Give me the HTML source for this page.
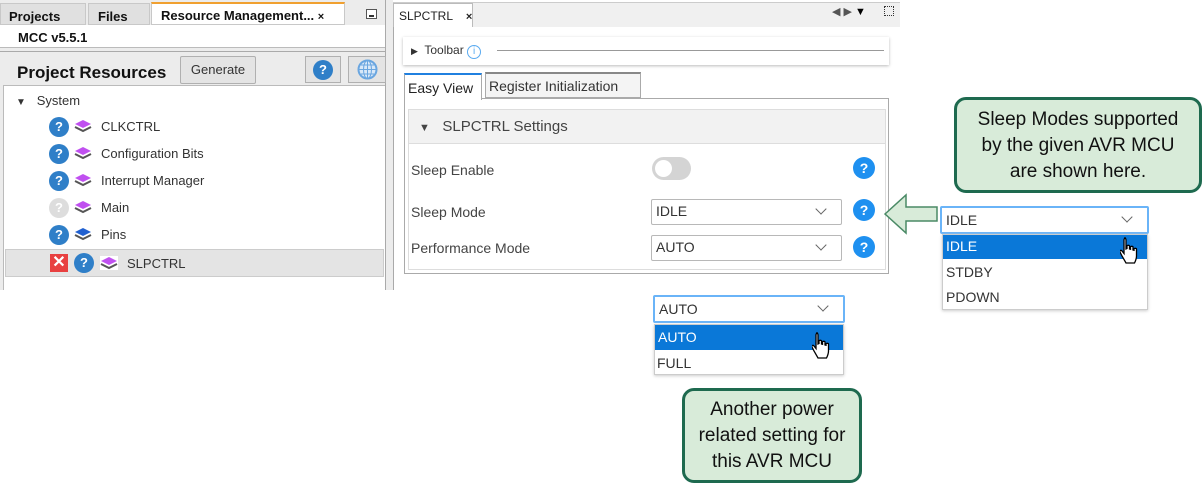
<!DOCTYPE html>
<html><head><style>
*{box-sizing:border-box;margin:0;padding:0}
body{width:1204px;height:485px;background:#fff;position:relative;overflow:hidden;font-family:"Liberation Sans",sans-serif;font-size:13px;color:#333}
.a{position:absolute;white-space:nowrap}
.q{position:absolute;width:20px;height:20px;border-radius:50%;background:#2f7fc8;color:#fff;font-weight:bold;font-size:13px;text-align:center;line-height:20px}
.qb{background:#1e90f0;width:22px;height:22px;line-height:22px;font-size:14px}
.sel{position:absolute;border:1px solid #b8b8b8;border-radius:2px;background:#fff;font-size:14px;color:#333;padding-left:4px;line-height:23px}
.chev{position:absolute;right:16px;top:5px;width:8px;height:8px;border-right:1.5px solid #666;border-bottom:1.5px solid #666;transform:rotate(45deg)}
.lay{position:absolute;width:18px;height:14px}
.call{position:absolute;background:#d8ebd9;border:3px solid #1e6a4f;border-radius:12px;font-size:19px;color:#111;text-align:center;line-height:26px;white-space:nowrap}
</style></head><body>
<!-- left panel -->
<div class="a" style="left:0;top:0;width:386px;height:290px;background:#ececec;border-right:1px solid #aaa"></div>
<div class="a" style="left:0;top:3px;width:86px;height:22px;background:#e0e0e0;border:1px solid #c8c8c8;font-weight:bold;font-size:13px;padding:5px 8px;color:#111">Projects</div>
<div class="a" style="left:88px;top:3px;width:62px;height:22px;background:#e0e0e0;border:1px solid #c8c8c8;font-weight:bold;font-size:13px;padding:5px 9px;color:#111">Files</div>
<div class="a" style="left:151px;top:2px;width:194px;height:23px;background:#fff;border:1px solid #c8c8c8;border-top:2px solid #f0a030;font-weight:bold;font-size:13px;padding:4px 9px;color:#111">Resource Management... <span style="font-size:11px">×</span></div>
<div class="a" style="left:366px;top:9px;width:11px;height:10px;border:1px solid #555;background:#fff"><div class="a" style="left:2px;top:5px;width:5px;height:2px;background:#333"></div></div>
<div class="a" style="left:0;top:25px;width:385px;height:23px;background:#fff;border-bottom:1px solid #bbb;font-weight:bold;font-size:13px;padding:5px 18px;color:#111">MCC v5.5.1</div>
<div class="a" style="left:0;top:51px;width:385px;height:2px;border-top:1px solid #aaa"></div>
<div class="a" style="left:17px;top:63px;font-weight:bold;font-size:17px;color:#111">Project Resources</div>
<div class="a" style="left:180px;top:56px;width:76px;height:28px;background:#e4e4e4;border:1px solid #b0b0b0;border-radius:2px;font-size:13px;text-align:center;line-height:26px">Generate</div>
<div class="a" style="left:305px;top:56px;width:36px;height:27px;background:#e4e4e4;border:1px solid #b0b0b0"><div class="q" style="left:7px;top:3px">?</div></div>
<div class="a" style="left:348px;top:56px;width:38px;height:27px;background:#e4e4e4;border:1px solid #b0b0b0"><svg class="a" style="left:8px;top:2px" width="21" height="21" viewBox="0 0 21 21"><circle cx="10.5" cy="10.5" r="9" fill="#d8e8f8" stroke="#6aa6e0" stroke-width="2"/><path d="M10.5 2v17M2 10.5h17M4 6h13M4 15h13" stroke="#6aa6e0" stroke-width="1"/><ellipse cx="10.5" cy="10.5" rx="4" ry="9" fill="none" stroke="#6aa6e0"/></svg></div>
<div class="a" style="left:3px;top:85px;width:382px;height:205px;background:#fff;border-left:1px solid #bbb;border-top:1px solid #bbb"></div>
<div class="a" style="left:16px;top:93px;font-size:13px"><span style="font-size:10px">▼</span>&nbsp;&nbsp;&nbsp;System</div>
<div class="a" style="left:5px;top:249px;width:379px;height:28px;background:#e4e4e4;border:1px solid #ccc"></div>
<div class="q" style="left:49px;top:117px">?</div><div class="q" style="left:49px;top:144px">?</div><div class="q" style="left:49px;top:171px">?</div>
<div class="q" style="left:49px;top:198px;background:#ddd">?</div><div class="q" style="left:49px;top:225px">?</div>
<div class="a" style="left:50px;top:254px;width:18px;height:18px;background:#e84040;color:#fff;font-weight:bold;text-align:center;line-height:18px;font-size:16px">✕</div>
<div class="q" style="left:74px;top:253px">?</div>
<svg class="lay" style="left:74px;top:119px" viewBox="0 0 18 14"><path d="M1 8l8 4 8-4" fill="none" stroke="#555" stroke-width="2"/><path d="M9 1l8 4-8 4-8-4z" fill="#c050f0"/></svg>
<svg class="lay" style="left:74px;top:146px" viewBox="0 0 18 14"><path d="M1 8l8 4 8-4" fill="none" stroke="#555" stroke-width="2"/><path d="M9 1l8 4-8 4-8-4z" fill="#c050f0"/></svg>
<svg class="lay" style="left:74px;top:173px" viewBox="0 0 18 14"><path d="M1 8l8 4 8-4" fill="none" stroke="#555" stroke-width="2"/><path d="M9 1l8 4-8 4-8-4z" fill="#c050f0"/></svg>
<svg class="lay" style="left:74px;top:200px" viewBox="0 0 18 14"><path d="M1 8l8 4 8-4" fill="none" stroke="#555" stroke-width="2"/><path d="M9 1l8 4-8 4-8-4z" fill="#c050f0"/></svg>
<svg class="lay" style="left:74px;top:227px" viewBox="0 0 18 14"><path d="M1 8l8 4 8-4" fill="none" stroke="#555" stroke-width="2"/><path d="M9 1l8 4-8 4-8-4z" fill="#2060d0"/></svg>
<svg class="lay" style="left:100px;top:256px;background:#fff" viewBox="0 0 18 14"><path d="M1 8l8 4 8-4" fill="none" stroke="#555" stroke-width="2"/><path d="M9 1l8 4-8 4-8-4z" fill="#c050f0"/></svg>
<div class="a" style="left:101px;top:119px">CLKCTRL</div>
<div class="a" style="left:101px;top:146px">Configuration Bits</div>
<div class="a" style="left:101px;top:173px">Interrupt Manager</div>
<div class="a" style="left:101px;top:200px">Main</div>
<div class="a" style="left:101px;top:227px">Pins</div>
<div class="a" style="left:127px;top:256px">SLPCTRL</div>
<!-- right panel -->
<div class="a" style="left:386px;top:0;width:7px;height:290px;background:#ececec"></div>
<div class="a" style="left:393px;top:2px;width:507px;height:25px;background:#f0f0f0;border-top:1px solid #ccc"></div>
<div class="a" style="left:393px;top:27px;width:1px;height:263px;background:#aaa"></div>
<div class="a" style="left:393px;top:3px;width:80px;height:24px;background:#fff;border:1px solid #bbb;border-bottom:none;font-size:12px;padding:5px 5px;color:#222">SLPCTRL &nbsp;&nbsp; <b style="font-size:11px">×</b></div>
<div class="a" style="left:832px;top:5px;font-size:11px;color:#555">◀ ▶ <span style="color:#000">▼</span></div>
<div class="a" style="left:884px;top:6px;width:10px;height:10px;border:1px dotted #333"></div>
<div class="a" style="left:403px;top:37px;width:486px;height:28px;background:#fff;box-shadow:0 1px 3px #bbb"></div>
<div class="a" style="left:411px;top:43px;font-size:12px"><span style="font-size:9px">▶</span>&nbsp; Toolbar <span style="display:inline-block;width:14px;height:14px;border:1px solid #5aaaf0;border-radius:50%;color:#5aaaf0;font-size:10px;text-align:center;line-height:12px">i</span></div>
<div class="a" style="left:497px;top:50px;width:387px;height:1px;background:#999"></div>
<div class="a" style="left:404px;top:98px;width:485px;height:176px;border:1px solid #aaa;background:#fff"></div>
<div class="a" style="left:404px;top:73px;width:78px;height:27px;background:#fff;border:1px solid #aaa;border-top:2px solid #2080e0;border-bottom:none;font-size:14px;padding:5px 3px;color:#222">Easy View</div>
<div class="a" style="left:485px;top:72px;width:156px;height:26px;background:#f4f4f4;border:1px solid #aaa;border-top:2px solid #888;font-size:14px;padding:4px 3px;color:#333">Register Initialization</div>
<div class="a" style="left:408px;top:109px;width:478px;height:35px;background:#f2f2f2;border:1px solid #ddd;font-size:15px;padding:8px 10px;color:#444"><span style="font-size:11px">▼</span>&nbsp;&nbsp; SLPCTRL Settings</div>
<div class="a" style="left:408px;top:144px;width:478px;height:126px;border:1px solid #ddd;border-top:none"></div>
<div class="a" style="left:411px;top:162px;font-size:14px;color:#444">Sleep Enable</div>
<div class="a" style="left:411px;top:204px;font-size:14px;color:#444">Sleep Mode</div>
<div class="a" style="left:411px;top:240px;font-size:14px;color:#444">Performance Mode</div>
<div class="a" style="left:652px;top:157px;width:39px;height:23px;border-radius:12px;background:#d4d4d4"><div class="a" style="left:3px;top:3px;width:17px;height:17px;border-radius:50%;background:#fff"></div></div>
<div class="sel" style="left:651px;top:199px;width:191px;height:26px">IDLE<div class="chev"></div></div>
<div class="sel" style="left:651px;top:235px;width:191px;height:26px">AUTO<div class="chev"></div></div>
<div class="q qb" style="left:853px;top:157px">?</div>
<div class="q qb" style="left:853px;top:199px">?</div>
<div class="q qb" style="left:853px;top:236px">?</div>
<!-- arrow -->
<svg class="a" style="left:883px;top:193px" width="56" height="42" viewBox="0 0 56 42"><path d="M2 21L23 2v12h31v14H23v12z" fill="#d8ebd9" stroke="#4a8a66" stroke-width="1.5"/></svg>
<!-- callout 1 -->
<div class="call" style="left:954px;top:97px;width:248px;height:96px;padding-top:7px">Sleep Modes supported<br>by the given AVR MCU<br>are shown here.</div>
<!-- dropdown 2 -->
<div class="sel" style="left:940px;top:206px;width:209px;height:28px;border:2px solid #6ab4f8;line-height:24px">IDLE<div class="chev"></div></div>
<div class="a" style="left:942px;top:234px;width:206px;height:76px;background:#fff;border:1px solid #ccc;box-shadow:0 1px 3px #ccc"></div>
<div class="a" style="left:943px;top:235px;width:204px;height:24px;background:#0a78d8;color:#fff;font-size:14px;padding:3px 3px">IDLE</div>
<div class="a" style="left:946px;top:264px;font-size:14px">STDBY</div>
<div class="a" style="left:946px;top:289px;font-size:14px">PDOWN</div>
<svg class="a" style="left:1120px;top:236px" width="22" height="30" viewBox="0 0 22 30"><path d="M6 2c1.5 0 2 1 2 2v9l1-.5V10c0-1 2.5-1 2.5 0v3l1 .3V11c0-1 2.5-1 2.5 0v3l1 .3V13c0-1 2.5-1 2.5 0v7c0 3-1 5-2 7H8l-4-7-2-4c-.5-1.5 1-2.3 2-1l2 2.5V4c0-1 .5-2 2-2z" fill="#fff" stroke="#000" stroke-width="1.3" transform="translate(-2 0)"/></svg>
<!-- dropdown 1 -->
<div class="sel" style="left:653px;top:295px;width:192px;height:28px;border:2px solid #6ab4f8;line-height:24px">AUTO<div class="chev"></div></div>
<div class="a" style="left:654px;top:324px;width:190px;height:51px;background:#fff;border:1px solid #ccc;box-shadow:0 1px 3px #ccc"></div>
<div class="a" style="left:655px;top:325px;width:188px;height:25px;background:#0a78d8;color:#fff;font-size:14px;padding:4px 3px">AUTO</div>
<div class="a" style="left:657px;top:355px;font-size:14px">FULL</div>
<svg class="a" style="left:812px;top:331px" width="22" height="30" viewBox="0 0 22 30"><path d="M6 2c1.5 0 2 1 2 2v9l1-.5V10c0-1 2.5-1 2.5 0v3l1 .3V11c0-1 2.5-1 2.5 0v3l1 .3V13c0-1 2.5-1 2.5 0v7c0 3-1 5-2 7H8l-4-7-2-4c-.5-1.5 1-2.3 2-1l2 2.5V4c0-1 .5-2 2-2z" fill="#fff" stroke="#000" stroke-width="1.3" transform="translate(-2 0)"/></svg>
<!-- callout 2 -->
<div class="call" style="left:682px;top:388px;width:180px;height:95px;padding-top:6px">Another power<br>related setting for<br>this AVR MCU</div>
</body></html>
